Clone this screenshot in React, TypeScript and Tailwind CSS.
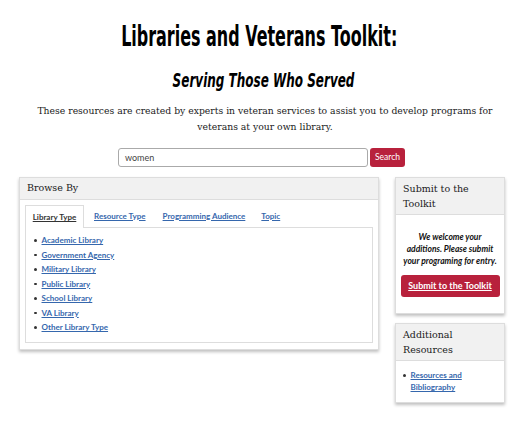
import React from "react";

const slab = { fontFamily: '"DejaVu Serif", "Liberation Serif", serif' };
const sans = { fontFamily: 'Lato, "Open Sans", "Liberation Sans", sans-serif' };
const cond = { fontFamily: '"DejaVu Sans", "Liberation Sans", sans-serif' };

const libTypes = [
  "Academic Library",
  "Government Agency",
  "Military Library",
  "Public Library",
  "School Library",
  "VA Library",
  "Other Library Type",
];

export default function App() {
  return (
    <div className="w-[530px] h-[428px] bg-white text-[#222] overflow-hidden">
      <div className="pt-[21px] flex flex-col items-center">
        <h1 className="mr-[12px] text-[28px] leading-[32px] font-bold text-black whitespace-nowrap scale-x-[0.57]" style={cond}>
          Libraries and Veterans Toolkit:
        </h1>
        <h2 className="mr-[3px] mt-[15px] text-[20px] leading-[24px] font-bold italic text-black whitespace-nowrap scale-x-[0.6]" style={cond}>
          Serving Those Who Served
        </h2>
        <p className="mt-[11px] text-[9.25px] leading-[16px] text-center text-[#1a1a1a] w-[480px]" style={slab}>
          These resources are created by experts in veteran services to assist you to develop programs for
          <br />
          veterans at your own library.
        </p>
        <div className="mt-[13px] flex gap-[2px] mr-[7px]">
          <div
            className="w-[250px] h-[19px] border border-[#aaa] rounded-[3px] px-[6px] flex items-center text-[9px] text-[#444]"
            style={sans}
          >
            women
          </div>
          <button
            className="w-[35px] h-[19px] bg-[#b8213c] text-white rounded-[3px] text-[8.5px] flex items-center justify-center"
            style={sans}
          >
            Search
          </button>
        </div>
      </div>

      <div className="flex gap-[16px] pl-[19px] mt-[10px] items-start">
        <div className="w-[360px] border border-[#ddd] shadow-[0_2px_3px_rgba(0,0,0,0.25)] bg-white">
          <div className="h-[22px] bg-[#f1f1f1] border-b border-[#ddd] flex items-center px-[7px] text-[9.5px] text-[#1a1a1a]" style={slab}>
            Browse By
          </div>
          <div className="px-[5px] pt-[4px] pb-[6px]">
            <div className="flex items-end h-[23px] text-[8px] font-bold" style={sans}>
              <div className="w-[59px] h-[23px] border border-[#ddd] border-b-0 bg-white flex items-center justify-center text-[#333] underline relative top-[1px]">
                Library Type
              </div>
              <div className="h-[23px] flex items-center ml-[10px] text-[#3567ad] underline">Resource Type</div>
              <div className="h-[23px] flex items-center ml-[17px] text-[#3567ad] underline">Programming Audience</div>
              <div className="h-[23px] flex items-center ml-[16px] text-[#3567ad] underline">Topic</div>
            </div>
            <div className="border border-[#ddd] h-[116px] pt-[5px] pl-[8px]">
              <ul className="text-[8px] font-bold" style={sans}>
                {libTypes.map((t) => (
                  <li key={t} className="h-[14.5px] flex items-center">
                    <span className="w-[2.5px] h-[2.5px] bg-[#333] rounded-full mr-[5px]" />
                    <span className="text-[#3567ad] underline">{t}</span>
                  </li>
                ))}
              </ul>
            </div>
          </div>
        </div>

        <div className="w-[110px] flex flex-col gap-[9px]">
          <div className="border border-[#ddd] shadow-[0_2px_3px_rgba(0,0,0,0.25)] bg-white">
            <div className="bg-[#f1f1f1] border-b border-[#ddd] px-[7px] pt-[3px] pb-[3px] text-[9.5px] leading-[15px] text-[#1a1a1a]" style={slab}>
              Submit to the
              <br />
              Toolkit
            </div>
            <div className="px-[5px] pt-[16px] pb-[16px] flex flex-col items-center">
              <p className="text-[8.5px] leading-[12px] font-bold italic text-center text-[#111]" style={sans}>
                We welcome your additions. Please submit your programing for entry.
              </p>
              <div
                className="mt-[8px] w-[99px] h-[22px] bg-[#b8213c] rounded-[3px] flex items-center justify-center text-white text-[9px] font-bold underline"
                style={sans}
              >
                Submit to the Toolkit
              </div>
            </div>
          </div>

          <div className="border border-[#ddd] shadow-[0_2px_3px_rgba(0,0,0,0.25)] bg-white">
            <div className="bg-[#f1f1f1] border-b border-[#ddd] px-[7px] pt-[3px] pb-[3px] text-[9.5px] leading-[15px] text-[#1a1a1a]" style={slab}>
              Additional
              <br />
              Resources
            </div>
            <div className="pl-[7px] pr-[5px] pt-[8px] pb-[9px]">
              <div className="flex text-[8px] leading-[12px] font-bold" style={sans}>
                <span className="w-[2.5px] h-[2.5px] bg-[#333] rounded-full mr-[5px] mt-[5px] shrink-0" />
                <span className="text-[#3567ad] underline">
                  Resources and
                  <br />
                  Bibliography
                </span>
              </div>
            </div>
          </div>
        </div>
      </div>
    </div>
  );
}
